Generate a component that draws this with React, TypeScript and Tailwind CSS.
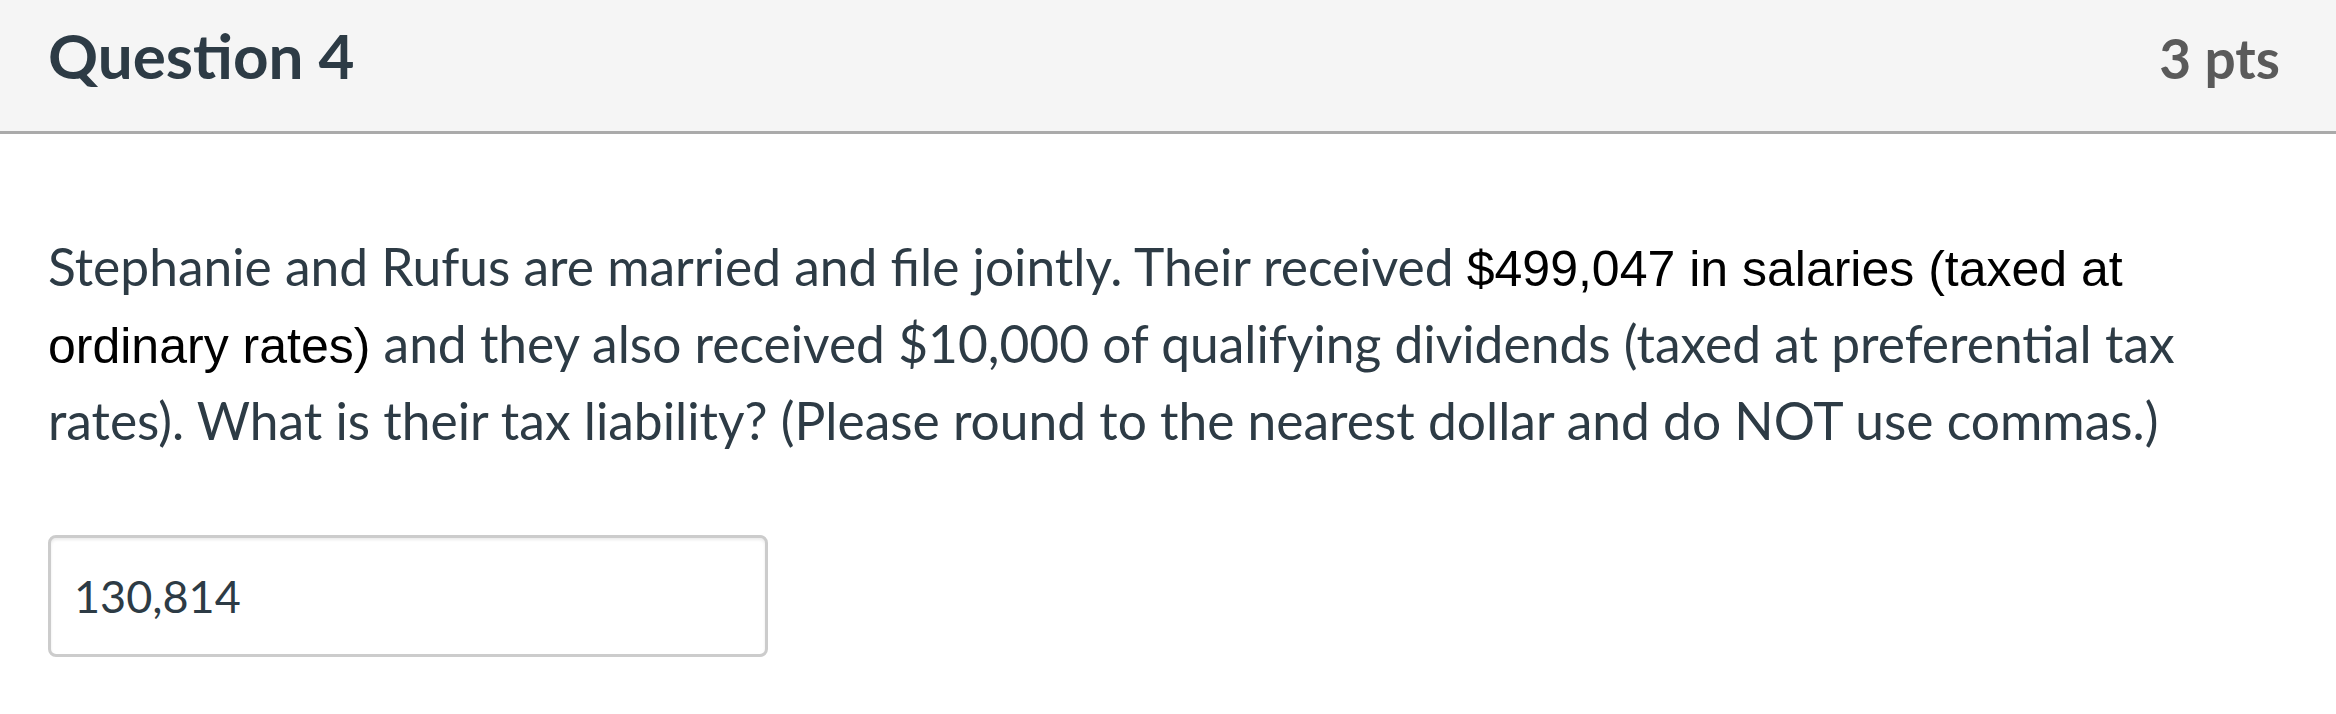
const App = () => {
  return (
    <div className="min-h-screen w-full bg-white" style={{ fontFamily: 'Lato, "Open Sans", sans-serif' }}>
      <div className="flex h-[134px] items-baseline justify-between border-b-[3px] border-[#aaaaaa] bg-[#f5f5f5] pl-[48px] pr-[56px] pt-[18px]">
        <h2 className="text-[62px] font-bold leading-[1.2] text-[#2d3b45]">Question 4</h2>
        <span className="text-[55px] font-bold leading-[1.2] text-[#5a5a5a]">3 pts</span>
      </div>

      <div className="pl-[48px] pr-[48px]">
        <p className="mt-[95px] text-[51.5px] leading-[74px] text-[#2d3b45]">
          Stephanie and Rufus are married and file jointly. Their received{' '}
          <span className="text-[50px] text-black" style={{ fontFamily: '"Liberation Sans", Arial, sans-serif' }}>
            $499,047 in salaries (taxed at ordinary rates)
          </span>{' '}
          and they also received $10,000 of qualifying dividends (taxed at preferential tax rates). What is their tax
          liability? (Please round to the nearest dollar and do NOT use commas.)
        </p>

        <div className="mt-[78px]">
          <input
            type="text"
            defaultValue="130,814"
            className="h-[122px] w-[720px] rounded-[8px] border-[3px] border-[#cccccc] bg-white pl-[23px] text-[45px] text-[#2d3b45] shadow-[inset_0_2px_3px_rgba(0,0,0,0.08)] outline-none"
            style={{ fontFamily: 'Lato, "Open Sans", sans-serif' }}
          />
        </div>
      </div>
    </div>
  )
}

export default App
